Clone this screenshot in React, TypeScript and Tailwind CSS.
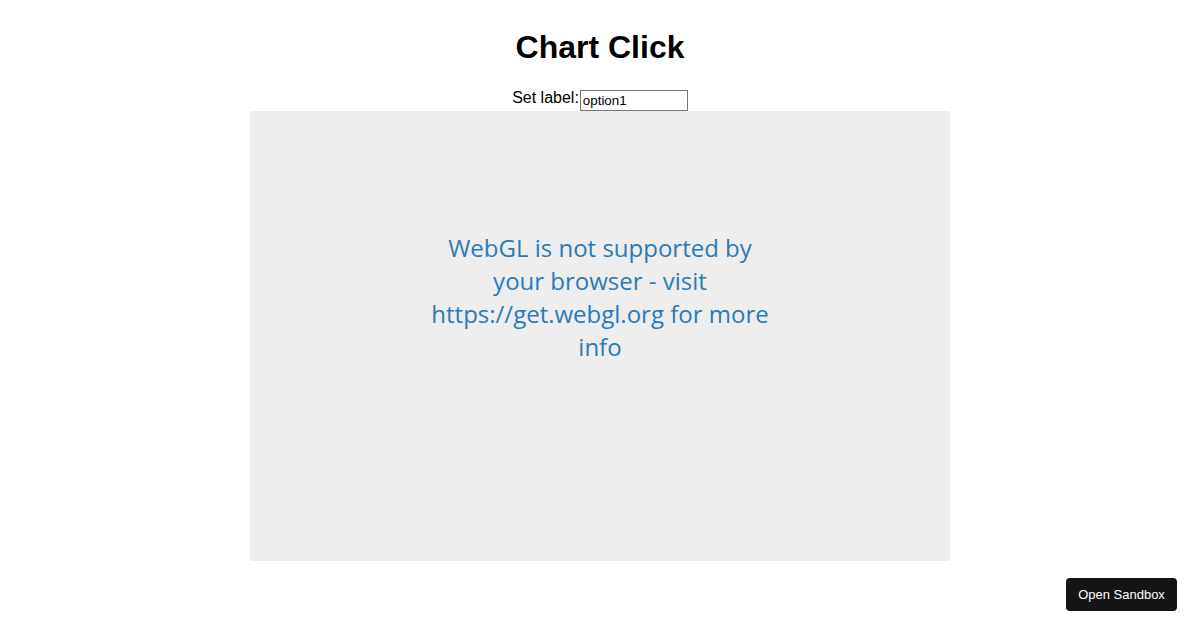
import React from "react";

export default function App() {
  return (
    <div className="relative w-full min-h-[630px] bg-white" style={{ fontFamily: '"Liberation Sans", Arial, sans-serif' }}>
      <div className="flex flex-col items-center pt-[29px]">
        <h1 className="text-[32px] leading-[37px] font-bold text-black">Chart Click</h1>
        <div className="mt-[22px] flex items-start h-[23px]">
          <span className="mt-[1px] text-[16px] leading-[18px] text-black">Set label:</span>
          <input
            defaultValue="option1"
            className="ml-[1px] mt-[1.5px] h-[21px] w-[108px] border border-[#767676] px-[2px] text-[13.33px] text-black bg-white outline-none"
            style={{ fontFamily: '"Liberation Sans", Arial, sans-serif' }}
          />
        </div>
        <div className="w-[700px] h-[450px] bg-[#ededed] pt-[120px] flex justify-center">
          <div
            className="w-[350px] text-center text-[24px] leading-[33px] text-[#2b7bb9]"
            style={{ fontFamily: '"Open Sans", sans-serif' }}
          >
            WebGL is not supported by your browser - visit https://get.webgl.org for more info
          </div>
        </div>
      </div>
      <button className="absolute right-[23px] top-[578px] w-[111px] h-[33px] rounded-[4px] bg-[#151515] text-white text-[13px] flex items-center justify-center">
        Open Sandbox
      </button>
    </div>
  );
}
